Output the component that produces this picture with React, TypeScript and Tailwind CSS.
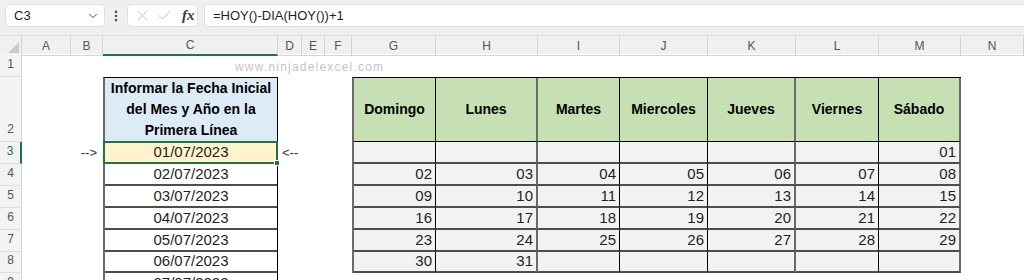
import React from "react";
import { ChevronDown, EllipsisVertical, X, Check } from "lucide-react";

const COLUMN_HEADERS = [
  { label: "A", cls: "" },
  { label: "B", cls: "" },
  { label: "C", cls: "text-[#217346] border-b-2 border-b-[#217346]" },
  { label: "D", cls: "" },
  { label: "E", cls: "" },
  { label: "F", cls: "" },
  { label: "G", cls: "" },
  { label: "H", cls: "" },
  { label: "I", cls: "" },
  { label: "J", cls: "" },
  { label: "K", cls: "" },
  { label: "L", cls: "" },
  { label: "M", cls: "" },
  { label: "N", cls: "" },
];

const ROW_HEADERS = [
  { n: 1, h: "h-[23px]", active: false },
  { n: 2, h: "h-[65px]", active: false },
  { n: 3, h: "h-[22px]", active: true },
  { n: 4, h: "h-[22px]", active: false },
  { n: 5, h: "h-[22px]", active: false },
  { n: 6, h: "h-[22px]", active: false },
  { n: 7, h: "h-[22px]", active: false },
  { n: 8, h: "h-[21px]", active: false },
  { n: 9, h: "h-[22px]", active: false },
];

const DATES = [
  { d: "02/07/2023", h: "h-[22px]" },
  { d: "03/07/2023", h: "h-[22px]" },
  { d: "04/07/2023", h: "h-[22px]" },
  { d: "05/07/2023", h: "h-[22px]" },
  { d: "06/07/2023", h: "h-[21px]" },
  { d: "07/07/2023", h: "h-[22px]" },
];

// right border of each weekday column (some are the thicker grey ones)
const DAYS = [
  { name: "Domingo", border: "border-r border-r-black" },
  { name: "Lunes", border: "border-r-2 border-r-[#6a6a6a]" },
  { name: "Martes", border: "border-r border-r-black" },
  { name: "Miercoles", border: "border-r border-r-black" },
  { name: "Jueves", border: "border-r-2 border-r-[#6a6a6a]" },
  { name: "Viernes", border: "border-r border-r-black" },
  { name: "Sábado", border: "border-r-2 border-r-[#6a6a6a]" },
];

const WEEKS = [
  ["", "", "", "", "", "", "01"],
  ["02", "03", "04", "05", "06", "07", "08"],
  ["09", "10", "11", "12", "13", "14", "15"],
  ["16", "17", "18", "19", "20", "21", "22"],
  ["23", "24", "25", "26", "27", "28", "29"],
  ["30", "31", "", "", "", "", ""],
];

const FormulaBar = () => (
  <div className="flex h-[35px] items-start bg-[#efefef] pl-[5px] pt-[4px]">
    <div className="flex h-[23px] w-[100px] items-center justify-between rounded-[4px] border border-[#e0e0e0] bg-white pl-[8px] pr-[4px] text-[13px] text-[#1f1f1f]">
      <span>C3</span>
      <ChevronDown size={14} strokeWidth={1.6} className="text-[#444]" />
    </div>
    <div className="flex h-[23px] w-[22px] items-center justify-center text-[#555]">
      <EllipsisVertical size={14} strokeWidth={2.5} />
    </div>
    <div className="flex h-[23px] w-[71px] items-center rounded-[4px] border border-[#e0e0e0] bg-white pl-[6px] text-[#b3b3b3]">
      <X size={17} strokeWidth={1.1} />
      <Check size={17} strokeWidth={1.1} className="ml-[5px]" />
      <span className="ml-[9px] font-['Liberation_Serif',serif] text-[15px] font-bold italic leading-none text-[#3a3a3a]">
        fx
      </span>
    </div>
    <div className="ml-[6px] flex h-[23px] flex-1 items-center rounded-l-[4px] border border-r-0 border-[#e0e0e0] bg-white pl-[8px] text-[13px] text-[#1f1f1f]">
      =HOY()-DIA(HOY())+1
    </div>
  </div>
);

const ColumnHeaders = () => (
  <div className="grid h-[19px] grid-cols-[22px_49px_32px_175px_24px_23px_27px_84px_102px_82px_88px_88px_83px_82px_63px] border-t border-[#dcdcdc] bg-[#f0f0f0]">
    <div className="flex items-end justify-end border-r border-b border-[#d4d4d4] pb-[2px] pr-[2px]">
      <svg width="11" height="11" viewBox="0 0 11 11">
        <polygon points="11,0 11,11 0,11" fill="#c9c9c9" />
      </svg>
    </div>
    {COLUMN_HEADERS.map((c) => (
      <div
        key={c.label}
        className={`flex items-center justify-center border-r border-b border-[#d4d4d4] text-[12px] text-[#555] ${c.cls}`}
      >
        {c.label}
      </div>
    ))}
  </div>
);

const RowHeaders = () => (
  <div className="flex w-[22px] flex-col bg-[#f3f3f3]">
    {ROW_HEADERS.map((r) => (
      <div
        key={r.n}
        className={`flex shrink-0 items-end justify-center border-b border-[#dedede] pb-[3px] text-[12px] ${r.h} ${
          r.active
            ? "border-r-2 border-r-[#217346] text-[#217346]"
            : "border-r border-r-[#d4d4d4] text-[#555]"
        }`}
      >
        {r.n}
      </div>
    ))}
  </div>
);

const DateColumn = () => (
  <div className="col-start-3 row-start-2 row-span-8 flex flex-col self-start border-t border-l-2 border-r border-t-black border-l-[#6a6a6a] border-r-black text-[15px] text-[#1f1f1f]">
    <div className="flex h-[64px] flex-col items-center justify-center border-b border-b-black bg-[#ddebf7] text-center text-[14px] leading-[21px] font-bold text-black">
      <span>Informar la Fecha Inicial</span>
      <span>del Mes y Año en la</span>
      <span>Primera Línea</span>
    </div>
    <div className="relative flex h-[22px] items-center justify-center border-b-2 border-b-[#4d4d4d] bg-[#fff2cc]">
      01/07/2023
      <div className="absolute -top-[1px] -right-[1px] -bottom-[2px] -left-[2px] border-2 border-[#217346]">
        <div className="absolute -right-[4px] -bottom-[4px] h-[6px] w-[6px] border border-white bg-[#217346]" />
      </div>
    </div>
    {DATES.map((r) => (
      <div
        key={r.d}
        className={`flex items-center justify-center border-b-2 border-b-[#4d4d4d] bg-white ${r.h}`}
      >
        {r.d}
      </div>
    ))}
  </div>
);

const Calendar = () => (
  <div className="col-start-7 col-span-7 row-start-2 row-span-7 grid grid-cols-[82px_102px_82px_88px_88px_83px_82px] grid-rows-[64px_22px_22px_22px_22px_22px_21px] self-start border-t border-l-2 border-t-black border-l-[#6a6a6a] text-[15px] text-[#1f1f1f]">
    {DAYS.map((d) => (
      <div
        key={d.name}
        className={`flex items-center justify-center border-b border-b-black bg-[#c6e0b4] text-[14px] font-bold text-black ${d.border}`}
      >
        {d.name}
      </div>
    ))}
    {WEEKS.map((week, wi) =>
      week.map((day, di) => (
        <div
          key={`${wi}-${di}`}
          className={`flex items-center justify-end border-b-2 border-b-[#4d4d4d] bg-[#f2f2f2] pr-[3px] ${DAYS[di].border}`}
        >
          {day}
        </div>
      ))
    )}
  </div>
);

export default function App() {
  return (
    <div className="h-[280px] w-[1024px] overflow-hidden bg-white font-['Liberation_Sans',Arial,sans-serif]">
      <FormulaBar />
      <ColumnHeaders />
      <div className="flex">
        <RowHeaders />
        <div className="grid flex-1 grid-cols-[49px_32px_175px_24px_23px_27px_84px_102px_82px_88px_88px_83px_82px_63px] grid-rows-[23px_65px_22px_22px_22px_22px_22px_21px_22px]">
          {/* watermark across row 1 */}
          <div className="col-start-3 col-span-5 row-start-1 flex items-center whitespace-nowrap pl-[132px] pt-[2px] text-[12px] tracking-[1.2px] text-[#c4c4c4]">
            www.ninjadelexcel.com
          </div>

          <div className="col-start-2 row-start-3 flex items-center justify-end whitespace-nowrap pr-[6px] text-[13px] text-[#333]">
            --&gt;
          </div>
          <DateColumn />
          <div className="col-start-4 row-start-3 flex items-center whitespace-nowrap pl-[4px] text-[13px] text-[#333]">
            &lt;--
          </div>

          <Calendar />
        </div>
      </div>
    </div>
  );
}
